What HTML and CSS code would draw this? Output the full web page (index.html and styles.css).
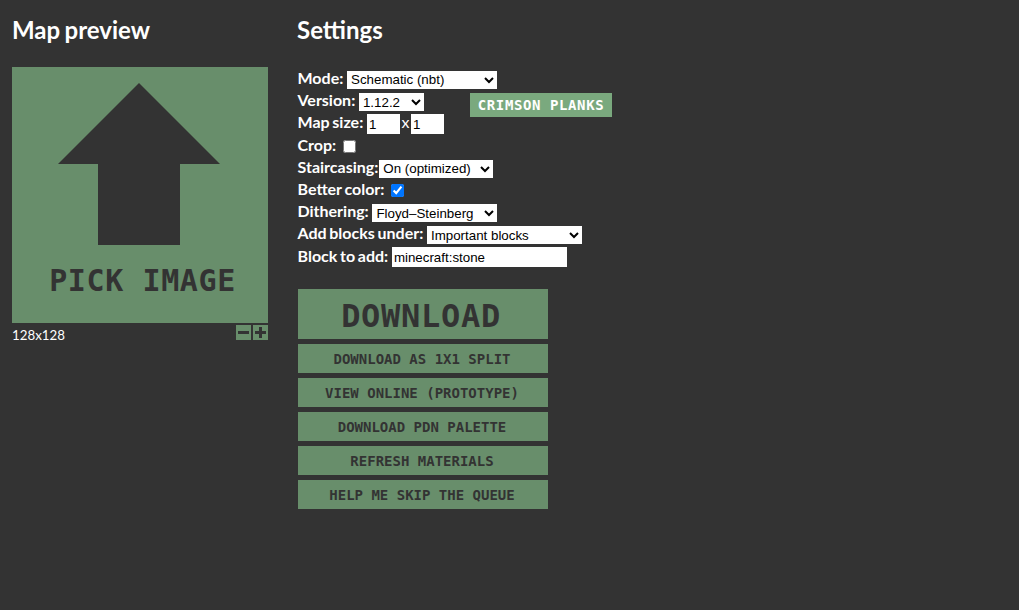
FILE: index.html
```html
<!DOCTYPE html>
<html lang="en">
<head>
  <meta charset="UTF-8">
  <title>Map preview</title>
  <link rel="stylesheet" href="styles.css">
</head>
<body>

  <div class="pagina">
    <div class="preview">
      <h2>Map preview</h2>
      <div class="pick">
        <svg class="flecha" width="162" height="162" viewBox="0 0 162 162">
          <polygon points="81,0 162,81 122,81 122,162 40,162 40,81 0,81" fill="#333"/>
        </svg>
        <span class="pick-texto">PICK IMAGE</span>
      </div>
      <div class="preview-pie">
        <span>128x128</span>
        <div class="zoom">
          <button class="zoom-btn" title="Zoom out">
            <svg width="15" height="15" viewBox="0 0 15 15"><rect x="2" y="6" width="11" height="3" fill="#333"/></svg>
          </button>
          <button class="zoom-btn" title="Zoom in">
            <svg width="15" height="15" viewBox="0 0 15 15"><rect x="2" y="6" width="11" height="3" fill="#333"/><rect x="6" y="2" width="3" height="11" fill="#333"/></svg>
          </button>
        </div>
      </div>
    </div>

    <div class="settings">
      <h2>Settings</h2>
      <div class="form">
        <div class="fila">Mode: <select class="s-mode"><option>Schematic (nbt)</option></select></div>
        <div class="fila">Version: <select class="s-version"><option>1.12.2</option></select></div>
        <div class="fila">Map size: <input class="i-size" type="text" value="1"><span class="por">x</span><input class="i-size" type="text" value="1"></div>
        <div class="fila">Crop: <input class="check" type="checkbox"></div>
        <div class="fila">Staircasing:<select class="s-stair"><option>On (optimized)</option></select></div>
        <div class="fila">Better color: <input class="check" type="checkbox" checked></div>
        <div class="fila">Dithering: <select class="s-dither"><option>Floyd–Steinberg</option></select></div>
        <div class="fila">Add blocks under: <select class="s-under"><option>Important blocks</option></select></div>
        <div class="fila">Block to add: <input class="i-block" type="text" value="minecraft:stone"></div>
        <div class="tooltip">CRIMSON PLANKS</div>
      </div>

      <div class="botones">
        <button class="grande">DOWNLOAD</button>
        <button>DOWNLOAD AS 1X1 SPLIT</button>
        <button>VIEW ONLINE (PROTOTYPE)</button>
        <button>DOWNLOAD PDN PALETTE</button>
        <button>REFRESH MATERIALS</button>
        <button>HELP ME SKIP THE QUEUE</button>
      </div>
    </div>
  </div>

</body>
</html>
```

FILE: styles.css
```css
html, body {
  margin: 0;
  height: 100%;
}
body {
  background-color: #333;
  color: white;
  font-family: Lato, sans-serif;
}
h2 {
  margin: 0;
  height: 67px;
  padding-top: 15px;
  box-sizing: border-box;
  font-size: 24px;
  line-height: 29px;
  font-weight: bold;
  word-spacing: -1.5px;
}
.pagina {
  display: flex;
  gap: 29px;
  padding-left: 12px;
}
.preview {
  width: 256px;
}
.pick {
  width: 256px;
  height: 256px;
  background-color: #688e6b;
  display: flex;
  flex-direction: column;
  align-items: center;
  padding-top: 16px;
  box-sizing: border-box;
}
.flecha {
  display: block;
  flex: none;
  margin-right: 2px;
}
.pick-texto {
  margin-top: 18px;
  padding-left: 5px;
  font-family: "DejaVu Sans Mono", monospace;
  font-weight: bold;
  font-size: 30px;
  line-height: 36px;
  letter-spacing: 0.6px;
  color: #333;
}
.preview-pie {
  display: flex;
  justify-content: space-between;
  align-items: flex-start;
  height: 24px;
}
.preview-pie span {
  font-size: 13.33px;
  line-height: 24px;
}
.zoom {
  display: flex;
  gap: 2px;
  padding-top: 2px;
}
.zoom-btn {
  width: 15px;
  height: 15px;
  padding: 0;
  border: none;
  background-color: #688e6b;
  display: block;
}
.zoom-btn svg {
  display: block;
}
.settings {
  width: 400px;
}
.form {
  position: relative;
}
.fila {
  height: 22.2px;
  line-height: 22px;
  font-size: 16px;
  font-weight: bold;
  word-spacing: -1.2px;
  white-space: nowrap;
  padding-left: 0.5px;
}
select, .fila input {
  font-family: "Liberation Sans", Arial, sans-serif;
  font-size: 13.33px;
  font-weight: normal;
  vertical-align: middle;
  box-sizing: border-box;
  background-color: white;
  color: black;
  margin: 0;
}
select {
  height: 20px;
  border: 1px solid #333;
  padding: 0;
}
.fila input[type="text"] {
  height: 22px;
  border: 1px solid #333;
  padding: 1px 2px;
}
.por {
  font-weight: normal;
  padding: 0 0.5px;
}
.s-mode { width: 152px; }
.s-version { width: 67px; }
.s-stair { width: 116px; }
.s-dither { width: 127px; }
.s-under { width: 157px; }
.fila .i-size { width: 35px; }
.fila .i-block { width: 177px; }
.fila .check {
  width: 13px;
  height: 13px;
  margin-left: 4px;
}
.tooltip {
  position: absolute;
  left: 173px;
  top: 26px;
  width: 142px;
  height: 24px;
  line-height: 24px;
  text-align: center;
  background-color: #7aa97e;
  color: white;
  font-family: "DejaVu Sans Mono", monospace;
  font-weight: bold;
  font-size: 14px;
  letter-spacing: 0.6px;
}
.botones {
  display: flex;
  flex-direction: column;
  gap: 5px;
  width: 250px;
  margin-left: 1px;
  margin-top: 22.2px;
}
.botones button {
  height: 29px;
  padding: 2px 2px 0 0;
  border: none;
  background-color: #688e6b;
  color: #333;
  font-family: "DejaVu Sans Mono", monospace;
  font-weight: bold;
  font-size: 14px;
}
.botones .grande {
  height: 50px;
  padding: 5px 4px 0 0;
  font-size: 32px;
  letter-spacing: 0.7px;
}
```
